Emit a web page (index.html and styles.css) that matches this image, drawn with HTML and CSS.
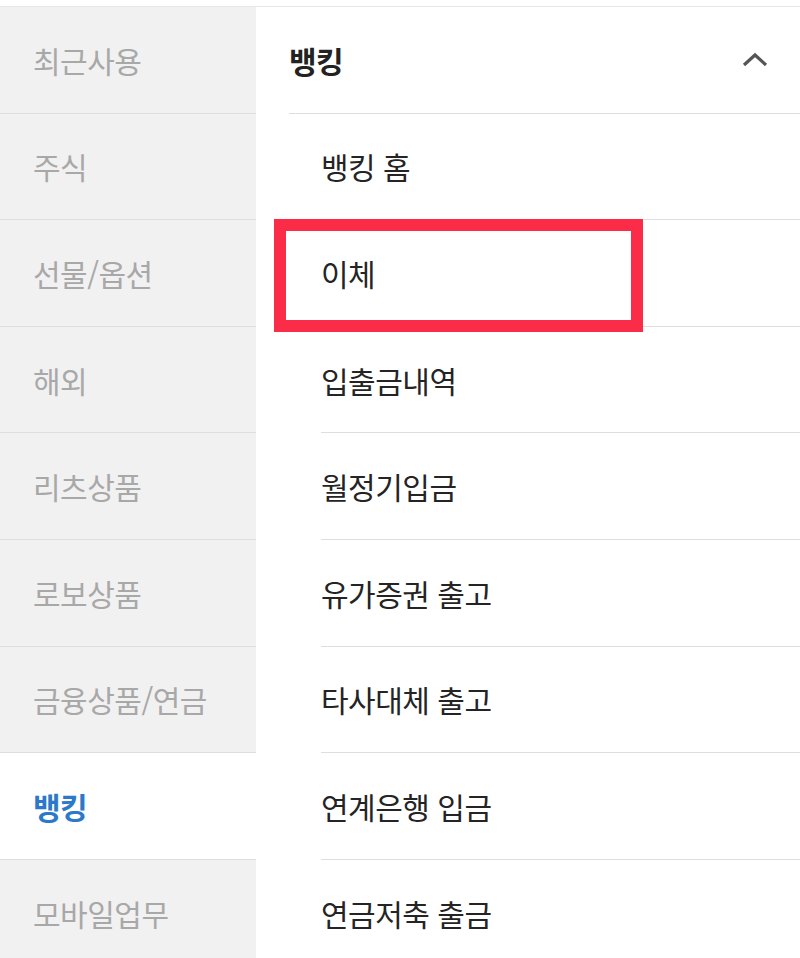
FILE: index.html
```html
<!DOCTYPE html>
<html lang="ko">
<head>
<meta charset="utf-8">
<link rel="stylesheet" href="styles.css">
</head>
<body>
<div class="page">
  <nav class="side">
    <div class="side-item">최근사용</div>
    <div class="side-item">주식</div>
    <div class="side-item">선물/옵션</div>
    <div class="side-item">해외</div>
    <div class="side-item">리츠상품</div>
    <div class="side-item">로보상품</div>
    <div class="side-item">금융상품/연금</div>
    <div class="side-item active">뱅킹</div>
    <div class="side-item">모바일업무</div>
  </nav>
  <section class="panel">
    <div class="panel-head">
      <span class="head-title">뱅킹</span>
      <svg class="chev" width="26" height="16" viewBox="0 0 26 16"><path d="M2 13 L13 3 L24 13" fill="none" stroke="#555" stroke-width="3.2"/></svg>
    </div>
    <ul class="menu">
      <li class="menu-item">뱅킹 홈</li>
      <li class="menu-item highlight">이체</li>
      <li class="menu-item">입출금내역</li>
      <li class="menu-item">월정기입금</li>
      <li class="menu-item">유가증권 출고</li>
      <li class="menu-item">타사대체 출고</li>
      <li class="menu-item">연계은행 입금</li>
      <li class="menu-item">연금저축 출금</li>
    </ul>
  </section>
</div>
</body>
</html>
```

FILE: styles.css
```css
*, *::before, *::after { box-sizing: border-box; }
html, body { margin: 0; padding: 0; background: #fff; }
body {
  width: 800px;
  height: 958px;
  overflow: hidden;
  font-family: "Noto Sans CJK KR", "Noto Sans", sans-serif;
}
.page {
  display: flex;
  margin-top: 6px;
  border-top: 1px solid #e6e6e6;
}
.side {
  width: 256px;
  flex: none;
  background: #f1f1f1;
}
.side-item {
  height: 106.6px;
  display: flex;
  align-items: center;
  padding-left: 33px;
  font-size: 30px;
  color: #a8a8a8;
  letter-spacing: -0.5px;
  border-bottom: 1px solid #dedede;
}
.side-item.active {
  background: #fff;
  color: #2d79c9;
  font-weight: 700;
}
.panel {
  flex: 1;
  padding-left: 33px;
  position: relative;
}
.panel-head {
  height: 106.6px;
  display: flex;
  align-items: center;
  justify-content: space-between;
  padding-right: 32px;
  border-bottom: 1px solid #dedede;
}
.head-title {
  font-size: 30px;
  font-weight: 700;
  color: #222;
  letter-spacing: -0.5px;
}
.chev { display: block; }
.menu {
  list-style: none;
  margin: 0;
  padding: 0 0 0 32px;
}
.menu-item {
  height: 106.6px;
  display: flex;
  align-items: center;
  font-size: 30px;
  color: #242424;
  letter-spacing: -0.5px;
  border-bottom: 1px solid #dedede;
  position: relative;
}
.menu-item.highlight::after {
  content: "";
  position: absolute;
  left: -47px;
  top: -1px;
  width: 369px;
  height: 113px;
  border: 12px solid #fb2c47;
}
```
